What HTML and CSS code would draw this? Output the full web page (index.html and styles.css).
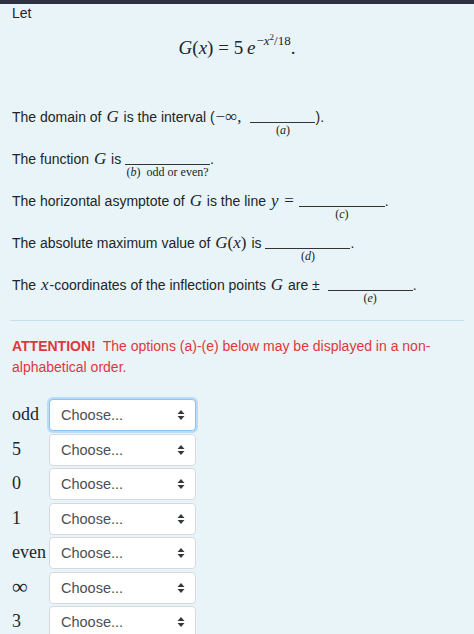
FILE: index.html
```html
<!DOCTYPE html>
<html>
<head>
<meta charset="utf-8">
<title>Question</title>
<link rel="stylesheet" href="styles.css">
</head>
<body>
<div class="topbar"></div>
<div class="content">
  <p class="let">Let</p>
  <p class="eq"><i>G</i>(<i>x</i>) = 5&thinsp;<i>e</i><sup>&minus;<i>x</i><sup>2</sup>/18</sup>.</p>

  <p class="stmt">The domain of <i class="m">G</i> is the interval (<span class="m">&minus;&infin;,</span> <span class="blank w-a"><span class="line"></span><span class="cap">(<i>a</i>)</span></span>).</p>
  <p class="stmt">The function <i class="m">G</i> is <span class="blank w-b"><span class="line"></span><span class="cap">(<i>b</i>)&nbsp; odd or even?</span></span>.</p>
  <p class="stmt">The horizontal asymptote of <i class="m">G</i> is the line <i class="m">y</i> <span class="m">=</span> <span class="blank w-c"><span class="line"></span><span class="cap">(<i>c</i>)</span></span>.</p>
  <p class="stmt">The absolute maximum value of <span class="m"><i>G</i>(<i>x</i>)</span> is <span class="blank w-d"><span class="line"></span><span class="cap">(<i>d</i>)</span></span>.</p>
  <p class="stmt">The <i class="m">x</i>-coordinates of the inflection points <i class="m">G</i> are &plusmn; <span class="blank w-e"><span class="line"></span><span class="cap">(<i>e</i>)</span></span>.</p>

  <hr class="divider">

  <p class="attention"><b class="warn">ATTENTION!</b>The options (a)-(e) below may be displayed in a non-alphabetical order.</p>

  <div class="answers">
    <div class="row"><span class="label">odd</span><div class="select focus"><span>Choose...</span><svg width="8" height="12" viewBox="0 0 8 12"><path d="M4 1 L7.5 5 H0.5 Z M4 11 L0.5 7 H7.5 Z" fill="#343a40"/></svg></div></div>
    <div class="row"><span class="label">5</span><div class="select"><span>Choose...</span><svg width="8" height="12" viewBox="0 0 8 12"><path d="M4 1 L7.5 5 H0.5 Z M4 11 L0.5 7 H7.5 Z" fill="#343a40"/></svg></div></div>
    <div class="row"><span class="label">0</span><div class="select"><span>Choose...</span><svg width="8" height="12" viewBox="0 0 8 12"><path d="M4 1 L7.5 5 H0.5 Z M4 11 L0.5 7 H7.5 Z" fill="#343a40"/></svg></div></div>
    <div class="row"><span class="label">1</span><div class="select"><span>Choose...</span><svg width="8" height="12" viewBox="0 0 8 12"><path d="M4 1 L7.5 5 H0.5 Z M4 11 L0.5 7 H7.5 Z" fill="#343a40"/></svg></div></div>
    <div class="row"><span class="label">even</span><div class="select"><span>Choose...</span><svg width="8" height="12" viewBox="0 0 8 12"><path d="M4 1 L7.5 5 H0.5 Z M4 11 L0.5 7 H7.5 Z" fill="#343a40"/></svg></div></div>
    <div class="row"><span class="label inf">&infin;</span><div class="select"><span>Choose...</span><svg width="8" height="12" viewBox="0 0 8 12"><path d="M4 1 L7.5 5 H0.5 Z M4 11 L0.5 7 H7.5 Z" fill="#343a40"/></svg></div></div>
    <div class="row"><span class="label">3</span><div class="select"><span>Choose...</span><svg width="8" height="12" viewBox="0 0 8 12"><path d="M4 1 L7.5 5 H0.5 Z M4 11 L0.5 7 H7.5 Z" fill="#343a40"/></svg></div></div>
  </div>
</div>
</body>
</html>
```

FILE: styles.css
```css
*{margin:0;padding:0;box-sizing:border-box}
body{
    background:#e8f4f7;
    color:#212529;
    font-family:"Liberation Sans",Arial,sans-serif;
    font-size:14px;
}
.topbar{
    height:4px;
    background:#2d3142;
}
.content{
    padding:1px 12px 0 12px;
}
.let{
    line-height:16px;
}
.eq{
    margin-top:15px;
    text-align:center;
    font-family:"Liberation Serif","Times New Roman",serif;
    font-size:19px;
    line-height:24px;
    height:24px;
}
.eq sup{
    font-size:13px;
    vertical-align:9px;
    line-height:0;
    margin-left:1px;
}
.eq sup sup{
    font-size:9px;
    vertical-align:5px;
    margin-left:0;
}
.m{
    font-family:"Liberation Serif","Times New Roman",serif;
    font-size:17px;
    margin:0 1px;
}
.stmt{
    line-height:20px;
    margin-bottom:12px;
}
.eq + .stmt{
    margin-top:47px;
}
.blank{
    display:inline-block;
    vertical-align:top;
    text-align:center;
}
.blank .line{
    display:block;
    height:16px;
    border-bottom:1px solid #333;
}
.blank .cap{
    display:block;
    font-family:"Liberation Serif","Times New Roman",serif;
    font-size:12px;
    line-height:14px;
}
.w-a{width:65px;margin-left:4px}
.w-b{width:85px}
.w-c{width:86px}
.w-d{width:85px}
.w-e{width:85px;margin-left:4px}
.divider{
    border:0;
    border-top:1px solid #c3e1ec;
    margin:15px -2px 0 -2px;
}
.attention{
    margin-top:15px;
    color:#e2363c;
    line-height:21px;
}
.warn{
    margin-right:7px;
}
.answers{
    margin-top:21px;
}
.row{
    display:flex;
    align-items:flex-start;
    margin-bottom:2.5px;
}
.label{
    width:37px;
    font-family:"Liberation Serif","Times New Roman",serif;
    font-size:18px;
    line-height:30px;
}
.label.inf{
    font-size:22px;
}
.select{
    width:147px;
    height:32px;
    display:flex;
    align-items:center;
    justify-content:space-between;
    padding:0 10px 0 11px;
    background:#fff;
    border:1px solid #d6dadf;
    border-radius:4px;
    color:#495057;
    font-size:14.5px;
}
.select.focus{
    border-color:#8cc2f5;
    box-shadow:0 0 0 2px rgba(128,189,255,.45);
}
```
